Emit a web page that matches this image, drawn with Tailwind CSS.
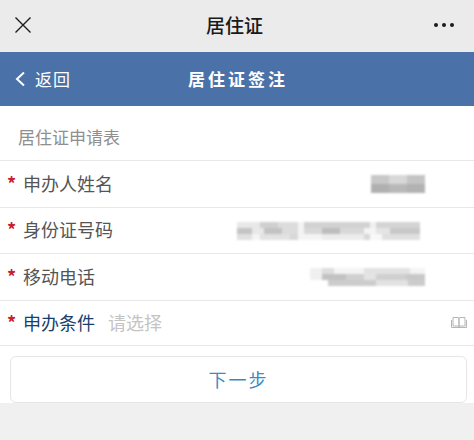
<!DOCTYPE html>
<html lang="zh">
  <head>
    <meta charset="UTF-8" />
    <meta name="viewport" content="width=device-width, initial-scale=1.0" />
    <title>居住证签注</title>
    <script src="https://cdn.jsdelivr.net/npm/@tailwindcss/browser@4"></script>
  </head>
  <body class="w-[474px] h-[440px] overflow-hidden bg-white font-['Noto_Sans_CJK_SC','Noto_Sans',sans-serif]">

    <!-- WeChat title bar -->
    <header class="h-[52px] bg-[#ebebeb] flex items-center justify-between pl-[15px] pr-[20px] pb-[2px]">
      <div class="w-[40px]">
        <svg class="w-[16px] h-[16px]" viewBox="0 0 16 16" fill="none" stroke="#1c1c1c" stroke-width="1.4">
          <path d="M0.5 0.5L15.5 15.5M15.5 0.5L0.5 15.5" />
        </svg>
      </div>
      <h1 class="text-[19px] font-medium text-[#1a1a1a]">居住证</h1>
      <div class="w-[40px] flex justify-end gap-[4px]">
        <span class="w-[4px] h-[4px] rounded-full bg-[#1a1a1a]"></span>
        <span class="w-[4px] h-[4px] rounded-full bg-[#1a1a1a]"></span>
        <span class="w-[4px] h-[4px] rounded-full bg-[#1a1a1a]"></span>
      </div>
    </header>

    <!-- Blue nav -->
    <nav class="relative h-[54px] bg-[#4a72a8] flex items-center justify-center text-white">
      <div class="absolute left-[15px] top-0 h-full flex items-center gap-[10px]">
        <svg class="w-[10px] h-[16px]" viewBox="0 0 10 16" fill="none" stroke="#fff" stroke-width="2">
          <path d="M9 1.5L2 8L9 14.5" />
        </svg>
        <span class="text-[17px] tracking-[1px]">返回</span>
      </div>
      <span class="text-[17px] font-bold tracking-[3px] pl-[2px]">居住证签注</span>
    </nav>

    <!-- Form -->
    <main>
      <div class="h-[54px] flex items-center pl-[18px] pt-[8px] text-[17px] text-[#8f8f8f]">居住证申请表</div>

      <div class="h-[47px] border-t border-[#e8e8e8] flex items-center pl-[7px] pr-[49px] pb-[2px]">
        <span class="text-[#c8202c] text-[18px] font-bold w-[16px]">*</span>
        <span class="text-[18px] text-[#555]">申办人姓名</span>
        <div class="ml-auto flex flex-col blur-[1px] mt-[1px]">
          <div class="flex">
            <i class="w-[18px] h-[9px] bg-[#c8c8c8]"></i>
            <i class="w-[18px] h-[9px] bg-[#d8d8d8]"></i>
            <i class="w-[18px] h-[9px] bg-[#c4c4c4]"></i>
          </div>
          <div class="flex">
            <i class="w-[18px] h-[9px] bg-[#b0b0b0]"></i>
            <i class="w-[18px] h-[9px] bg-[#b8b8b8]"></i>
            <i class="w-[18px] h-[9px] bg-[#b2b2b2]"></i>
          </div>
        </div>
      </div>

      <div class="h-[46px] border-t border-[#e8e8e8] flex items-center pl-[7px] pr-[54px] pb-[2px]">
        <span class="text-[#c8202c] text-[18px] font-bold w-[16px]">*</span>
        <span class="text-[18px] text-[#555]">身份证号码</span>
        <div class="ml-auto flex flex-col blur-[1px] mt-[2px]">
          <div class="flex">
            <i class="w-[23px] h-[6px] bg-[#e8e8e8]"></i>
            <i class="w-[18px] h-[6px] bg-[#cfcfcf]"></i>
            <i class="w-[20px] h-[6px] bg-[#dcdcdc]"></i>
            <i class="w-[6px] h-[6px] bg-[#f4f4f4]"></i>
            <i class="w-[66px] h-[6px] bg-[#d2d2d2]"></i>
            <i class="w-[6px] h-[6px] bg-[#f0f0f0]"></i>
            <i class="w-[44px] h-[6px] bg-[#d4d4d4]"></i>
          </div>
          <div class="flex">
            <i class="w-[15px] h-[6px] bg-[#c4c4c4]"></i>
            <i class="w-[12px] h-[6px] bg-[#e8e8e8]"></i>
            <i class="w-[18px] h-[6px] bg-[#c2c2c2]"></i>
            <i class="w-[16px] h-[6px] bg-[#dcdcdc]"></i>
            <i class="w-[6px] h-[6px] bg-[#f4f4f4]"></i>
            <i class="w-[18px] h-[6px] bg-[#d8d8d8]"></i>
            <i class="w-[18px] h-[6px] bg-[#bdbdbd]"></i>
            <i class="w-[24px] h-[6px] bg-[#d8d8d8]"></i>
            <i class="w-[12px] h-[6px] bg-[#f4f4f4]"></i>
            <i class="w-[14px] h-[6px] bg-[#e4e4e4]"></i>
            <i class="w-[30px] h-[6px] bg-[#c8c8c8]"></i>
          </div>
          <div class="flex">
            <i class="w-[15px] h-[6px] bg-[#e0e0e0]"></i>
            <i class="w-[8px] h-[6px] bg-[#f4f4f4]"></i>
            <i class="w-[30px] h-[6px] bg-[#e2e2e2]"></i>
            <i class="w-[8px] h-[6px] bg-[#d8d8d8]"></i>
            <i class="w-[24px] h-[6px] bg-[#f4f4f4]"></i>
            <i class="w-[42px] h-[6px] bg-[#ececec]"></i>
            <i class="w-[6px] h-[6px] bg-[#d8d8d8]"></i>
            <i class="w-[12px] h-[6px] bg-[#f8f8f8]"></i>
            <i class="w-[38px] h-[6px] bg-[#e0e0e0]"></i>
          </div>
        </div>
      </div>

      <div class="h-[47px] border-t border-[#e8e8e8] flex items-center pl-[7px] pr-[49px] pb-[2px]">
        <span class="text-[#c8202c] text-[18px] font-bold w-[16px]">*</span>
        <span class="text-[18px] text-[#555]">移动电话</span>
        <div class="ml-auto flex flex-col blur-[1px] mt-[2px]">
          <div class="flex">
            <i class="w-[12px] h-[6px] bg-[#f0f0f0]"></i>
            <i class="w-[12px] h-[6px] bg-[#dedede]"></i>
            <i class="w-[30px] h-[6px] bg-[#f4f4f4]"></i>
            <i class="w-[46px] h-[6px] bg-[#e2e2e2]"></i>
            <i class="w-[15px] h-[6px] bg-[#f4f4f4]"></i>
          </div>
          <div class="flex">
            <i class="w-[12px] h-[6px] bg-[#f0f0f0]"></i>
            <i class="w-[24px] h-[6px] bg-[#c2c2c2]"></i>
            <i class="w-[18px] h-[6px] bg-[#d0d0d0]"></i>
            <i class="w-[12px] h-[6px] bg-[#e4e4e4]"></i>
            <i class="w-[30px] h-[6px] bg-[#d0d0d0]"></i>
            <i class="w-[19px] h-[6px] bg-[#c8c8c8]"></i>
          </div>
          <div class="flex">
            <i class="w-[18px] h-[6px] bg-white"></i>
            <i class="w-[48px] h-[6px] bg-[#cccccc]"></i>
            <i class="w-[32px] h-[6px] bg-[#e2e2e2]"></i>
            <i class="w-[17px] h-[6px] bg-[#cccccc]"></i>
          </div>
        </div>
      </div>

      <div class="h-[46px] border-y border-[#e8e8e8] flex items-center pl-[7px] pr-[7px] pb-[1px]">
        <span class="text-[#c8202c] text-[18px] font-bold w-[16px]">*</span>
        <span class="text-[18px] text-[#17406f]">申办条件</span>
        <span class="text-[18px] text-[#c4c4c4] ml-[13px]">请选择</span>
        <svg class="ml-auto w-[16px] h-[14px]" viewBox="0 0 16 14" fill="none" stroke="#b5b5b5" stroke-width="1">
          <path d="M2 1.5H7C7.6 1.5 8 2 8 2.5V11C8 10.5 7.6 10 7 10H2ZM14 1.5H9C8.4 1.5 8 2 8 2.5V11C8 10.5 8.4 10 9 10H14Z" />
          <path d="M0.5 4V11.5H15.5V4" />
        </svg>
      </div>

      <div class="pl-[10px] pr-[7px] pt-[10px]">
        <button class="w-full h-[47px] bg-white border border-[#e6e6e6] rounded-[6px] text-[18px] text-[#3a8ac8] tracking-[2px]">下一步</button>
      </div>
    </main>

    <div class="h-[37px] bg-[#f0f0f0]"></div>
  </body>
</html>
